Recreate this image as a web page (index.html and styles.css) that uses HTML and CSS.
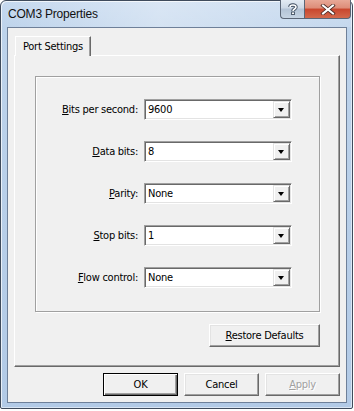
FILE: index.html
```html
<!DOCTYPE html>
<html lang="en">
<head>
  <meta charset="UTF-8">
  <title>COM3 Properties</title>
  <link rel="stylesheet" href="styles.css">
</head>
<body>
  <div class="window">
    <div class="titlebar">
      <span class="title">COM3 Properties</span>
      <div class="caption-buttons">
        <span class="cap-btn help">
          <svg width="10" height="12" viewBox="0 0 10 12">
            <path d="M2 4 C2 1.5 8 1.2 8 4 C8 6 5 6 5 8" fill="none" stroke="#3b4a5c" stroke-width="3.4"/>
            <path d="M2 4 C2 1.5 8 1.2 8 4 C8 6 5 6 5 8" fill="none" stroke="#fff" stroke-width="1.6"/>
            <rect x="3.6" y="9" width="2.8" height="2.6" fill="#fff" stroke="#3b4a5c" stroke-width="0.9"/>
          </svg>
        </span>
        <span class="cap-btn close">
          <svg width="16" height="11" viewBox="0 0 16 11">
            <path d="M3 1.5 L13 9.5 M13 1.5 L3 9.5" stroke="#4a2a24" stroke-width="3.6" stroke-linecap="square"/>
            <path d="M3 1.5 L13 9.5 M13 1.5 L3 9.5" stroke="#fff" stroke-width="2" stroke-linecap="square"/>
          </svg>
        </span>
      </div>
    </div>

    <div class="client">
      <div class="tabs">
        <span class="tab active">Port Settings</span>
      </div>

      <div class="pane">
        <div class="groupbox">
          <label class="field-label"><u>B</u>its per second:</label>
          <div class="combo"><span class="value">9600</span><span class="drop"></span></div>

          <label class="field-label"><u>D</u>ata bits:</label>
          <div class="combo"><span class="value">8</span><span class="drop"></span></div>

          <label class="field-label"><u>P</u>arity:</label>
          <div class="combo"><span class="value">None</span><span class="drop"></span></div>

          <label class="field-label"><u>S</u>top bits:</label>
          <div class="combo"><span class="value">1</span><span class="drop"></span></div>

          <label class="field-label"><u>F</u>low control:</label>
          <div class="combo"><span class="value">None</span><span class="drop"></span></div>
        </div>
        <div class="pane-actions">
          <button class="btn wide"><u>R</u>estore Defaults</button>
        </div>
      </div>

      <div class="dialog-buttons">
        <button class="btn default">OK</button>
        <button class="btn">Cancel</button>
        <button class="btn" disabled><u>A</u>pply</button>
      </div>
    </div>
  </div>
</body>
</html>
```

FILE: styles.css
```css
* {
  box-sizing: border-box;
}
body {
  margin: 0;
  background: #fff;
  font-family: "DejaVu Sans Condensed", "DejaVu Sans", sans-serif;
  font-size: 11px;
  letter-spacing: -0.25px;
  color: #000;
}
u {
  text-decoration: underline;
  text-underline-offset: 1px;
}

/* window frame */
.window {
  width: 353px;
  height: 409px;
  border: 1px solid #3f4b5c;
  border-radius: 6px 6px 2px 2px;
  padding: 0 5px 5px 6px;
  background: linear-gradient(180deg, #c6d9ef 0, #bdd3eb 30px, #b2cae6 100%);
  box-shadow: inset 1px 1px 0 rgba(255, 255, 255, 0.7), inset -1px -1px 0 rgba(255, 255, 255, 0.5);
  display: flex;
  flex-direction: column;
}
.titlebar {
  height: 26px;
  margin: 0 -5px 0 -6px;
  padding-left: 7px;
  display: flex;
  align-items: flex-start;
  background: linear-gradient(90deg, rgba(255,255,255,0) 0, rgba(255,255,255,0.35) 45%, rgba(255,255,255,0.1) 100%);
  border-radius: 5px 5px 0 0;
}
.title {
  font-family: "Liberation Sans", Arial, sans-serif;
  font-size: 12px;
  letter-spacing: -0.2px;
  margin-top: 6px;
  color: #111;
}
.caption-buttons {
  margin-left: auto;
  margin-right: 1px;
  margin-top: -1px;
  display: flex;
}
.cap-btn {
  height: 19px;
  display: flex;
  align-items: center;
  justify-content: center;
  border: 1px solid #5b6676;
  border-top: none;
}
.help {
  width: 24px;
  border-radius: 0 0 0 4px;
  border-right: none;
  background: linear-gradient(180deg, #e3ebf3 0, #ccd8e5 45%, #b3c3d5 50%, #c6d4e3 100%);
}
.close {
  width: 47px;
  border-radius: 0 0 4px 0;
  background: linear-gradient(180deg, #e8a897 0, #dd8c78 45%, #c9462d 50%, #d3694c 100%);
}

/* client area */
.client {
  flex: 1;
  border: 1px solid #6e8099;
  background: #f0f0f0;
  padding: 8px 6px 6px 6px;
  display: flex;
  flex-direction: column;
}
.tabs {
  display: flex;
  padding-left: 1px;
}
.tab {
  position: relative;
  z-index: 1;
  width: 76px;
  height: 20px;
  margin-bottom: -1px;
  padding-top: 3px;
  text-align: center;
  white-space: nowrap;
  background: #f0f0f0;
  border: 1px solid #fff;
  border-bottom: none;
  border-right: 1px solid #696969;
  box-shadow: inset -1px 0 0 #a0a0a0;
}
.pane {
  width: 326px;
  height: 312px;
  border: 1px solid;
  border-color: #fff #696969 #696969 #fff;
  box-shadow: inset -1px -1px 0 #a0a0a0;
  padding: 20px;
}

/* group box with the fields */
.groupbox {
  width: 285px;
  height: 236px;
  border: 1px solid #a0a0a0;
  box-shadow: inset 1px 1px 0 #fff, 1px 1px 0 #fff;
  padding-top: 22px;
  display: grid;
  grid-template-columns: 102px 148px;
  grid-auto-rows: 21px;
  column-gap: 6px;
  row-gap: 21px;
  align-content: start;
}
.field-label {
  text-align: right;
  align-self: center;
  white-space: nowrap;
}
.combo {
  position: relative;
  height: 21px;
  background: #fff;
  border: 1px solid;
  border-color: #a0a0a0 #fff #fff #a0a0a0;
  box-shadow: inset 1px 1px 0 #696969, inset -1px -1px 0 #e3e3e3;
  padding: 3px 0 0 3px;
}
.drop {
  position: absolute;
  top: 1px;
  right: 1px;
  width: 17px;
  height: 17px;
  background: #f0f0f0;
  border: 1px solid;
  border-color: #e3e3e3 #696969 #696969 #e3e3e3;
  box-shadow: inset 1px 1px 0 #fff, inset -1px -1px 0 #a0a0a0;
}
.drop::after {
  content: "";
  position: absolute;
  left: 4px;
  top: 6px;
  border-left: 3.5px solid transparent;
  border-right: 3.5px solid transparent;
  border-top: 4px solid #000;
}

.pane-actions {
  width: 285px;
  margin-top: 12px;
  display: flex;
  justify-content: flex-end;
}

/* push buttons */
.btn {
  width: 75px;
  height: 23px;
  font: inherit;
  letter-spacing: inherit;
  color: #000;
  background: #f0f0f0;
  border: 1px solid;
  border-color: #fff #696969 #696969 #fff;
  box-shadow: inset -1px -1px 0 #a0a0a0, inset 1px 1px 0 #e3e3e3;
  padding: 0;
}
.btn.wide {
  width: 111px;
}
.btn.default {
  border: 1px solid #000;
  box-shadow: inset 1px 1px 0 #fff, inset -1px -1px 0 #696969, inset -2px -2px 0 #a0a0a0;
}
.btn:disabled {
  color: #a0a0a0;
  text-shadow: 1px 1px 0 #fff;
}
.dialog-buttons {
  margin-top: 6px;
  display: flex;
  justify-content: flex-end;
  gap: 6px;
}
```
